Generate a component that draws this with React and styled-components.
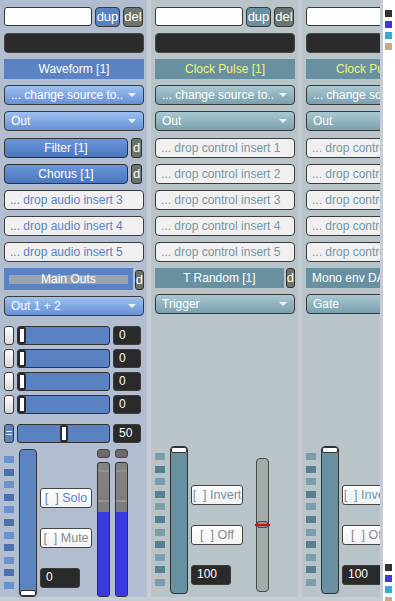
import React from 'react';
import styled, { createGlobalStyle, ThemeProvider } from 'styled-components';

const audioTheme = {
	bg: '#b2becf',
	header: '#5b83c1',
	headerText: '#ffffff',
	dup: '#5b80c0',
	selectTop: '#9cc0f0',
	selectBottom: '#6890d4',
	slotText: '#5b82c2',
	fader: '#5a84c2',
	lampA: '#6b92ce',
	lampB: '#4b72ae',
	accentText: '#5b82c2',
	tail: 0,
};

const controlTheme = {
	bg: '#b9c4c9',
	header: '#6990a1',
	headerText: '#eef37a',
	dup: '#6890a0',
	selectTop: '#a9c8d1',
	selectBottom: '#7aa0ae',
	slotText: '#7597a6',
	fader: '#6890a0',
	lampA: '#7a9eab',
	lampB: '#5a7f8f',
	accentText: '#6d94a4',
	tail: 3,
};

const swatches = ['#333333', '#3a3ae0', '#33aad4', '#c4ac80'];

const GlobalStyle = createGlobalStyle`
	* { box-sizing: border-box; }
	html, body {
		margin: 0;
		padding: 0;
		background: #c7cbd3;
	}
	body {
		font-family: "Liberation Sans", Arial, sans-serif;
		font-size: 12px;
	}
`;

const Page = styled.div`
	display: flex;
	height: 601px;
	overflow: hidden;
`;

const Rack = styled.div`
	width: 380px;
	margin-right: 3px;
	display: flex;
	gap: 4px;
	overflow: hidden;
`;

const Palette = styled.div`
	width: 12px;
	background: #ffffff;
	display: flex;
	flex-direction: column;
	justify-content: space-between;
	padding: 10px 0 0 2px;
`;

const SwatchGroup = styled.div`
	display: flex;
	flex-direction: column;
	gap: 4px;
	margin-bottom: ${(p) => (p.$bottom ? '-3px' : '0')};
`;

const Swatch = styled.div`
	width: 7px;
	height: 7px;
	background: ${(p) => p.$color};
`;

const Column = styled.div`
	flex-shrink: 0;
	width: 147px;
	height: 597px;
	display: flex;
	flex-direction: column;
	gap: 6px;
	padding: 7px 3px ${(p) => p.theme.tail}px 4px;
	background: ${(p) => p.theme.bg};
`;

const TopRow = styled.div`
	display: grid;
	grid-template-columns: 88px 25px 20px;
	column-gap: 3px;
	height: 20px;
`;

const NameField = styled.div`
	height: 19px;
	background: #ffffff;
	border: 1px solid #3a3a3a;
	border-radius: 3px;
	color: #ffffff;
	padding-left: 4px;
	line-height: 17px;
	overflow: hidden;
	white-space: nowrap;
`;

const TinyButton = styled.div`
	height: 20px;
	border: 1px solid #3a3a3a;
	border-radius: 4px;
	background: ${(p) => (p.$tone === 'accent' ? p.theme.dup : '#6d756e')};
	color: #ffffff;
	font-size: 13px;
	line-height: 18px;
	text-align: center;
`;

const Screen = styled.div`
	height: 20px;
	background: #2b2b2b;
	border: 1px solid #474747;
	border-radius: 4px;
`;

const Title = styled.div`
	flex: ${(p) => (p.$grow ? '1' : '0 0 auto')};
	height: 20px;
	padding: 0 6px;
	background: ${(p) => p.theme.header};
	color: ${(p) => (p.$plain ? '#ffffff' : p.theme.headerText)};
	line-height: 20px;
	text-align: center;
	white-space: nowrap;
	overflow: hidden;
`;

const SelectBox = styled.div`
	height: 20px;
	display: flex;
	align-items: center;
	justify-content: space-between;
	padding: 0 7px 0 6px;
	border: 1px solid #3a3a3a;
	border-radius: 4px;
	background: linear-gradient(${(p) => p.theme.selectTop}, ${(p) => p.theme.selectBottom});
	color: #ffffff;
	white-space: nowrap;
	overflow: hidden;
`;

const Caret = styled.span`
	flex-shrink: 0;
	width: 0;
	height: 0;
	border-left: 4px solid transparent;
	border-right: 4px solid transparent;
	border-top: 4px solid rgba(255, 255, 255, 0.85);
`;

const InsertList = styled.div`
	display: flex;
	flex-direction: column;
	gap: 6px;
	margin-top: 1px;
`;

const InsertRow = styled.div`
	display: grid;
	grid-template-columns: 124px 11px;
	column-gap: 3px;
	height: 20px;
`;

const InsertButton = styled.div`
	border: 1px solid #333333;
	border-radius: 4px;
	background: linear-gradient(#6c96da, #4c76bc);
	color: #ffffff;
	line-height: 18px;
	text-align: center;
`;

const DeleteKey = styled.div`
	height: 20px;
	border: 1px solid #333333;
	border-radius: 3px;
	background: #6a726b;
	color: #ffffff;
	font-size: 13px;
	line-height: 17px;
	text-align: center;
`;

const Slot = styled.div`
	height: 20px;
	padding-left: 5px;
	border: 1px solid #3c3c3c;
	border-radius: 4px;
	background: #f0f0f0;
	color: ${(p) => p.theme.slotText};
	line-height: 18px;
	white-space: nowrap;
	overflow: hidden;
`;

const BusRow = styled.div`
	display: flex;
	align-items: flex-end;
	gap: 2px;
`;

const MasterTitle = styled.div`
	flex: 1;
	height: 22px;
	padding: 7px 5px 6px;
	background: ${(p) => p.theme.header};
`;

const Plate = styled.div`
	height: 9px;
	background: #9aa2ad;
	color: #ffffff;
	line-height: 9px;
	text-align: center;
	white-space: nowrap;
`;

const SendList = styled.div`
	display: flex;
	flex-direction: column;
	gap: 4px;
	margin-top: 4px;
`;

const SendRow = styled.div`
	display: grid;
	grid-template-columns: 10px 93px 28px;
	column-gap: 3px;
	height: 19px;
	margin-top: ${(p) => (p.$gapAbove ? '6px' : '0')};
`;

const Toggle = styled.div`
	border: 1px solid #3a3a3a;
	border-radius: 3px;
	background: ${(p) => (p.$on ? '#5a82c2' : 'linear-gradient(#ffffff, #d9d9d9)')};
	color: #ffffff;
	font-size: 11px;
	line-height: 16px;
	text-align: center;
`;

const Track = styled.div`
	position: relative;
	border: 1px solid #333333;
	border-radius: 3px;
	background: #5a82c2;
`;

const Knob = styled.div`
	position: absolute;
	top: 0;
	bottom: 0;
	width: 8px;
	border: 2px solid #2a2a2a;
	border-radius: 2px;
	background: #ffffff;
`;

const Readout = styled.div`
	width: ${(p) => p.$width || 'auto'};
	height: ${(p) => p.$height || '19px'};
	padding-left: 5px;
	border: 1px solid #3d3d3d;
	border-radius: 3px;
	background: #2a2a2a;
	color: #ffffff;
	line-height: 17px;
`;

const Deck = styled.div`
	margin-top: auto;
	height: 148px;
	display: flex;
	align-items: flex-start;
`;

const Ladder = styled.div`
	width: 10px;
	height: 148px;
	margin-right: 5px;
	padding: 7px 0 8px;
	display: flex;
	flex-direction: column;
	justify-content: space-between;
`;

const Lamp = styled.div`
	height: 7px;
	background: ${(p) => (p.$alt ? p.theme.lampB : p.theme.lampA)};
`;

const Fader = styled.div`
	position: relative;
	width: 18px;
	height: 148px;
	margin-right: 3px;
	border: 1px solid #333333;
	border-radius: 4px;
	background: ${(p) => p.theme.fader};
`;

const FaderCap = styled.div`
	position: absolute;
	left: 0;
	right: 0;
	${(p) => (p.$top ? 'top: 0;' : 'bottom: 0;')}
	height: 6px;
	border: 1.5px solid #333333;
	border-radius: 2px;
	background: #ffffff;
`;

const Middle = styled.div`
	width: 52px;
	padding-top: 39px;
	display: flex;
	flex-direction: column;
	gap: 20px;
`;

const CheckButton = styled.div`
	height: 20px;
	border: 1px solid #444444;
	border-radius: 3px;
	background: linear-gradient(#ffffff, #f1f1f1);
	color: ${(p) => (p.$accent ? p.theme.accentText : '#8a8a8a')};
	font-size: 12.5px;
	line-height: 18px;
	text-align: center;
	white-space: pre;
	overflow: hidden;
`;

const Meters = styled.div`
	display: flex;
	gap: 5px;
	height: 148px;
	margin-left: 5px;
`;

const Meter = styled.div`
	width: 13px;
	display: flex;
	flex-direction: column;
	gap: 4px;
`;

const MeterCap = styled.div`
	height: 9px;
	border: 1px solid #474747;
	border-radius: 3px;
	background: #6b6b6b;
`;

const MeterBody = styled.div`
	position: relative;
	flex: 1;
	overflow: hidden;
	border: 1px solid #333333;
	border-radius: 3px;
	background:
		linear-gradient(transparent 7px, rgba(255, 255, 255, 0.12) 7px, rgba(255, 255, 255, 0.12) 9px, transparent 9px,
			transparent 37px, rgba(255, 255, 255, 0.18) 37px, rgba(255, 255, 255, 0.18) 39px, transparent 39px),
		linear-gradient(#848484, #6e6e6e);
`;

const MeterFill = styled.div`
	position: absolute;
	left: 0;
	right: 0;
	bottom: 0;
	background: #3939e0;
`;

const Rail = styled.div`
	position: relative;
	width: 13px;
	height: 134px;
	margin: 12px 0 0 13px;
	border: 1px solid #4a4a4a;
	border-radius: 4px;
	background: #a3abab;
`;

const Grip = styled.div`
	position: absolute;
	left: 0;
	right: 0;
	top: 62px;
	height: 7px;
	border: 1px solid #4a4a4a;
	border-radius: 2px;
	background: #8c9595;
`;

const RedLine = styled.div`
	position: absolute;
	left: -2px;
	right: -2px;
	top: 65px;
	height: 2px;
	background: #dd0a0a;
`;

const Header = () => (
	<>
		<TopRow>
			<NameField>channel</NameField>
			<TinyButton $tone="accent">dup</TinyButton>
			<TinyButton $tone="mute">del</TinyButton>
		</TopRow>
		<Screen />
	</>
);

const Select = ({ children }) => (
	<SelectBox>
		<span>{children}</span>
		<Caret />
	</SelectBox>
);

const LampLadder = () => (
	<Ladder>
		{Array.from({ length: 11 }, (_, i) => (
			<Lamp key={i} $alt={i % 2 === 1} />
		))}
	</Ladder>
);

const AudioChannel = () => (
	<ThemeProvider theme={audioTheme}>
		<Column>
			<Header />
			<Title>Waveform [1]</Title>
			<Select>... change source to..</Select>
			<Select>Out</Select>
			<InsertList>
				{['Filter [1]', 'Chorus [1]'].map((name) => (
					<InsertRow key={name}>
						<InsertButton>{name}</InsertButton>
						<DeleteKey>d</DeleteKey>
					</InsertRow>
				))}
				{[3, 4, 5].map((n) => (
					<Slot key={n}>... drop audio insert {n}</Slot>
				))}
			</InsertList>
			<BusRow>
				<MasterTitle>
					<Plate>Main Outs</Plate>
				</MasterTitle>
				<DeleteKey>d</DeleteKey>
			</BusRow>
			<Select>Out 1 + 2</Select>
			<SendList>
				{[0, 1, 2, 3].map((i) => (
					<SendRow key={i}>
						<Toggle />
						<Track>
							<Knob style={{ left: 0 }} />
						</Track>
						<Readout>0</Readout>
					</SendRow>
				))}
				<SendRow $gapAbove>
					<Toggle $on>=</Toggle>
					<Track>
						<Knob style={{ left: 'calc((100% - 8px) * 0.5)' }} />
					</Track>
					<Readout>50</Readout>
				</SendRow>
			</SendList>
			<Deck>
				<LampLadder />
				<Fader>
					<FaderCap />
				</Fader>
				<Middle>
					<CheckButton $accent>[  ] Solo</CheckButton>
					<CheckButton>[  ] Mute</CheckButton>
					<Readout $width="40px" $height="20px">0</Readout>
				</Middle>
				<Meters>
					{[63, 63].map((level, i) => (
						<Meter key={i}>
							<MeterCap />
							<MeterBody>
								<MeterFill style={{ height: `${level}%` }} />
							</MeterBody>
						</Meter>
					))}
				</Meters>
			</Deck>
		</Column>
	</ThemeProvider>
);

const ControlChannel = ({ title, modulator, mode }) => (
	<ThemeProvider theme={controlTheme}>
		<Column>
			<Header />
			<Title>{title}</Title>
			<Select>... change source to..</Select>
			<Select>Out</Select>
			<InsertList>
				{[1, 2, 3, 4, 5].map((n) => (
					<Slot key={n}>... drop control insert {n}</Slot>
				))}
			</InsertList>
			<BusRow>
				<Title $grow $plain>
					{modulator}
				</Title>
				<DeleteKey>d</DeleteKey>
			</BusRow>
			<Select>{mode}</Select>
			<Deck>
				<LampLadder />
				<Fader>
					<FaderCap $top />
				</Fader>
				<Middle>
					<CheckButton $accent>[  ] Invert</CheckButton>
					<CheckButton>[  ] Off</CheckButton>
					<Readout $width="40px" $height="20px">100</Readout>
				</Middle>
				<Rail>
					<Grip />
					<RedLine />
				</Rail>
			</Deck>
		</Column>
	</ThemeProvider>
);

export default function App() {
	return (
		<Page>
			<GlobalStyle />
			<Rack>
				<AudioChannel />
				<ControlChannel title="Clock Pulse [1]" modulator="T Random [1]" mode="Trigger" />
				<ControlChannel title="Clock Pulse [1]" modulator="Mono env DAHDSR [1]" mode="Gate" />
			</Rack>
			<Palette>
				<SwatchGroup>
					{swatches.map((c) => (
						<Swatch key={c} $color={c} />
					))}
				</SwatchGroup>
				<SwatchGroup $bottom>
					{swatches.map((c) => (
						<Swatch key={c} $color={c} />
					))}
				</SwatchGroup>
			</Palette>
		</Page>
	);
}
